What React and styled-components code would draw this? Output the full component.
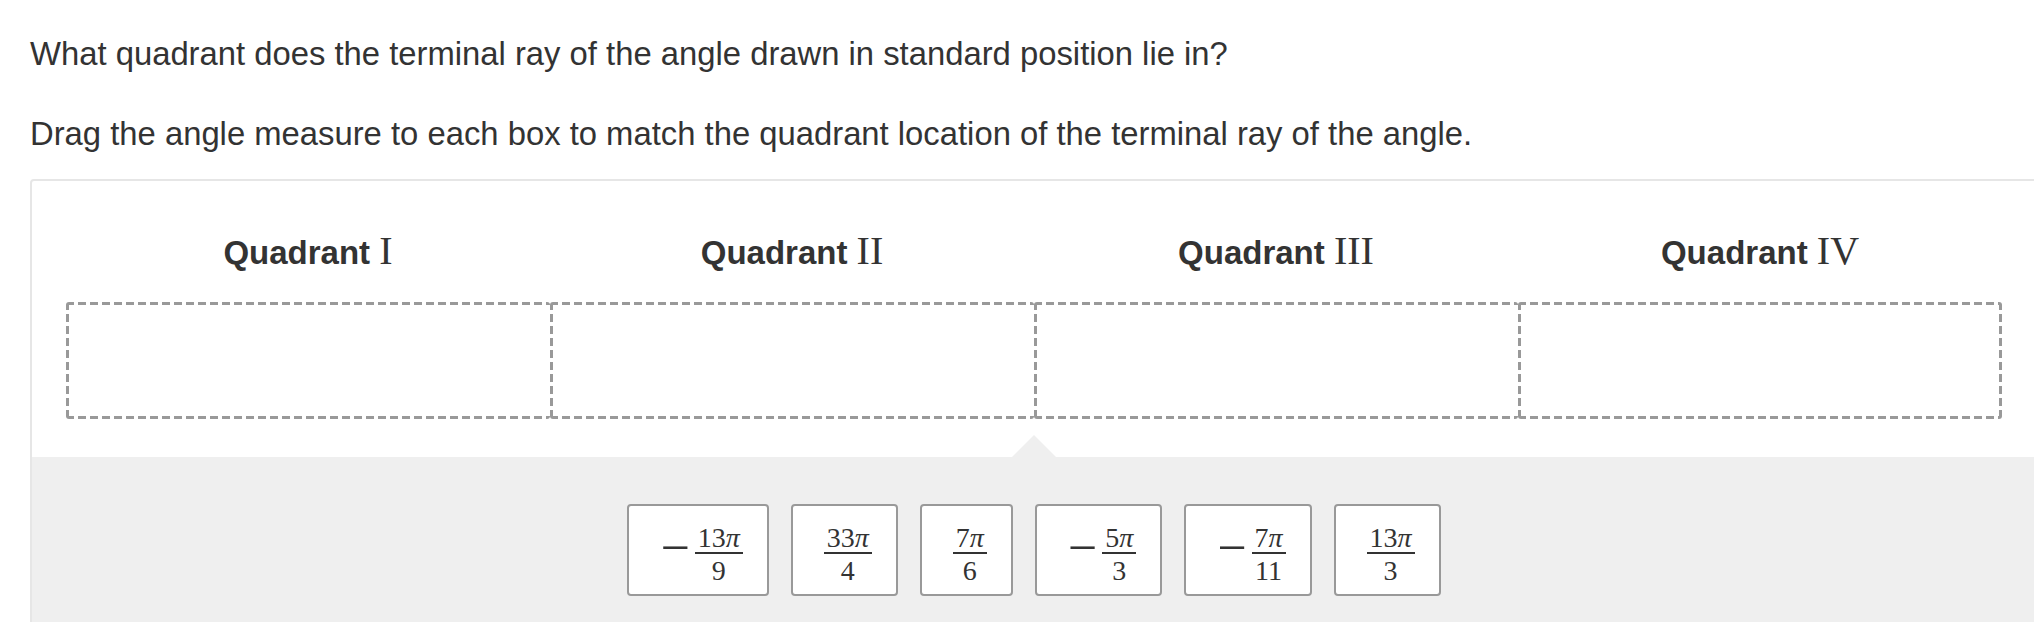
import React from "react";
import styled, { createGlobalStyle } from "styled-components";

const GlobalStyle = createGlobalStyle`
  html, body {
    margin: 0;
    padding: 0;
    background: #fff;
  }
  body {
    overflow: hidden;
    font-family: "Liberation Sans", Arial, sans-serif;
    color: #333;
  }
`;

const Page = styled.div`
  padding: 31px 0 0 30px;
`;

const Intro = styled.div`
  display: flex;
  flex-direction: column;
  gap: 35px;
  margin-bottom: 23px;
`;

const Prompt = styled.p`
  margin: 0;
  font-size: 32.8px;
  line-height: 45px;
`;

const Board = styled.div`
  width: 2008px;
  box-sizing: border-box;
  border: 2px solid #e6e6e6;
  border-radius: 4px;
`;

const DropArea = styled.div`
  padding: 47px 34px 38px;
`;

const Columns = styled.div`
  display: grid;
  grid-template-columns: repeat(4, 1fr);
`;

const Label = styled.div`
  text-align: center;
  font-size: 33px;
  line-height: 45px;
  font-weight: bold;
  color: #333;
`;

const Numeral = styled.span`
  font-family: "Liberation Serif", "Times New Roman", serif;
  font-weight: normal;
  font-size: 40px;
`;

const dash = (dir) =>
  `repeating-linear-gradient(${dir}, #999 0 8px, transparent 8px 12px)`;

const Zones = styled(Columns)`
  margin-top: 27px;
`;

const Zone = styled.div`
  height: 117px;
  border-radius: 3px;
  background-image: ${dash("to right")}, ${dash("to right")}, ${dash("to bottom")};
  background-size: 100% 3px, 100% 3px, 3px 100%;
  background-position: left top, left bottom, left top;
  background-repeat: no-repeat;

  &:last-child {
    background-image: ${dash("to right")}, ${dash("to right")}, ${dash("to bottom")},
      ${dash("to bottom")};
    background-size: 100% 3px, 100% 3px, 3px 100%, 3px 100%;
    background-position: left top, left bottom, left top, right top;
  }
`;

const Tray = styled.div`
  position: relative;
  display: flex;
  justify-content: center;
  gap: 22px;
  padding: 47px 0 60px;
  background: #efefef;

  &::before {
    content: "";
    position: absolute;
    top: -22px;
    left: 50%;
    margin-left: -22px;
    border-style: solid;
    border-width: 0 22px 22px;
    border-color: transparent transparent #efefef;
  }
`;

const Tile = styled.div`
  height: 92px;
  box-sizing: border-box;
  display: flex;
  align-items: center;
  padding: 7px 24px 0 31px;
  background: #fff;
  border: 2px solid #999;
  border-radius: 4px;
  font-family: "Liberation Serif", "Times New Roman", serif;
  color: #333;
  cursor: grab;
`;

const Minus = styled.span`
  font-size: 52px;
  line-height: 52px;
  margin-right: 5px;
  margin-bottom: 12px;
`;

const Frac = styled.span`
  display: inline-flex;
  flex-direction: column;
  align-items: center;
  font-size: 28px;
  line-height: 27px;
`;

const Num = styled.span`
  padding: 0 3px;
  margin-bottom: 1px;
`;

const Bar = styled.span`
  align-self: stretch;
  height: 2px;
  background: #333;
`;

const Den = styled.span`
  padding: 0 3px;
  margin-top: 3px;
`;

const Pi = styled.i`
  font-style: italic;
`;

const quadrants = ["I", "II", "III", "IV"];

const angles = [
  { neg: true, n: "13", d: "9" },
  { neg: false, n: "33", d: "4" },
  { neg: false, n: "7", d: "6" },
  { neg: true, n: "5", d: "3" },
  { neg: true, n: "7", d: "11" },
  { neg: false, n: "13", d: "3" },
];

const App = () => {
  return (
    <Page>
      <GlobalStyle />
      <Intro>
        <Prompt>
          What quadrant does the terminal ray of the angle drawn in standard
          position lie in?
        </Prompt>
        <Prompt>
          Drag the angle measure to each box to match the quadrant location of
          the terminal ray of the angle.
        </Prompt>
      </Intro>

      <Board>
        <DropArea>
          <Columns>
            {quadrants.map((q) => (
              <Label key={q}>
                Quadrant <Numeral>{q}</Numeral>
              </Label>
            ))}
          </Columns>
          <Zones>
            {quadrants.map((q) => (
              <Zone key={q} />
            ))}
          </Zones>
        </DropArea>

        <Tray>
          {angles.map((a, i) => (
            <Tile key={i}>
              {a.neg && <Minus>−</Minus>}
              <Frac>
                <Num>
                  {a.n}
                  <Pi>π</Pi>
                </Num>
                <Bar />
                <Den>{a.d}</Den>
              </Frac>
            </Tile>
          ))}
        </Tray>
      </Board>
    </Page>
  );
};

export default App;
